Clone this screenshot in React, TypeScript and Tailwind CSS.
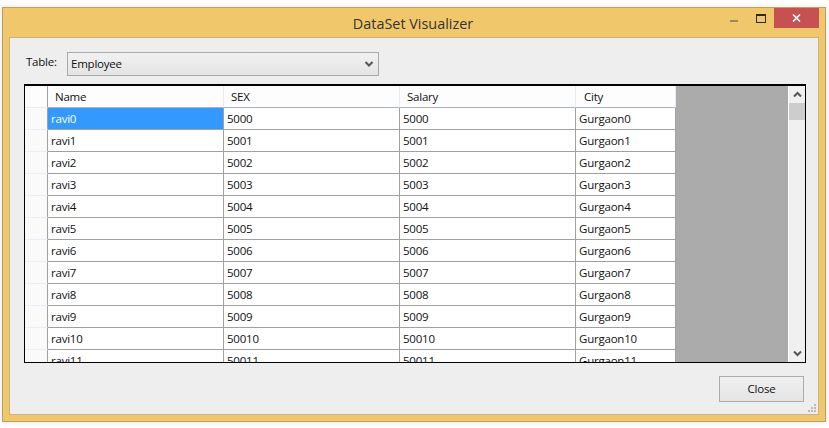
const rows = Array.from({ length: 12 }, (_, i) => i);

function Cell({ w, children, selected }: { w: string; children: React.ReactNode; selected?: boolean }) {
  return (
    <div className={`${w} h-[22px] shrink-0 border-r border-b border-[#a0a0a0] pl-[3px] leading-[21px] whitespace-nowrap ${selected ? "bg-[#3399ff] text-white" : "bg-white text-[#111]"}`}>
      {children}
    </div>
  );
}

function Head({ w, children, pad }: { w: string; children: React.ReactNode; pad: string }) {
  return (
    <div className={`${w} h-[22px] shrink-0 border-r border-b border-r-[#e4ecf5] border-b-[#a9b2c4] bg-[#fdfdfd] ${pad} leading-[21px] text-[#111]`}>
      {children}
    </div>
  );
}

export default function App() {
  return (
    <div className="h-[428px] w-[829px] overflow-hidden bg-white pl-[2px] pt-[7px] text-[11.5px] tracking-[-0.22px] [font-family:'Open_Sans','Noto_Sans',sans-serif]">
      <div className="flex h-[415px] w-[824px] flex-col border border-[#b9a165] bg-[#f0c86b] shadow-[0_0_5px_rgba(0,0,0,0.12)]">
        <div className="relative flex h-[29px] shrink-0 items-center justify-center pt-[2px] pr-[2px] text-[14.4px] tracking-normal text-[#333]">
          DataSet Visualizer
          <div className="absolute right-[6px] top-0 flex h-[20px] items-start">
            <div className="mr-[18px] mt-[12px] h-[2px] w-[8px] bg-[#9a8a58]" />
            <div className="mr-[8px] mt-[6px] h-[9px] w-[10px] border border-t-[2px] border-[#2d2a20] bg-[#f0c86b]" />
            <div className="flex h-[20px] w-[45px] items-center justify-center bg-[#c75050]">
              <svg width="9" height="8" viewBox="0 0 9 8" fill="none" stroke="white" strokeWidth="1.6">
                <path d="M1 0.5 L8 7.5 M8 0.5 L1 7.5" />
              </svg>
            </div>
          </div>
        </div>
        <div className="relative mx-[6px] flex h-[378px] flex-col border border-[#c7b27d] bg-[#eeeeee] px-[14px] pt-[14px]">
          <div className="flex h-[23px] items-center">
            <span className="ml-[2px] w-[41px] -translate-y-[2px] text-[#111]">Table:</span>
            <div className="flex h-[24px] w-[312px] items-center justify-between border border-[#a9a9a9] bg-gradient-to-b from-[#f2f2f2] to-[#e4e4e4] pl-[3px] pr-[4px] text-[#111]">
              Employee
              <svg width="10" height="8" viewBox="0 0 10 8" fill="none" stroke="#555" strokeWidth="2">
                <path d="M1.5 2 L5 5.5 L8.5 2" />
              </svg>
            </div>
          </div>
          <div className="mt-[9px] flex h-[279px] w-[782px] overflow-hidden border border-t-2 border-black bg-[#ababab]">
            <div className="w-[652px] shrink-0 overflow-hidden">
              <div className="flex">
                <div className="h-[22px] w-[23px] shrink-0 border-r border-b border-r-[#a0a0a0] border-b-[#e4ecf5] bg-[#fdfdfd]" />
                <Head w="w-[176px]" pad="pl-[7px]">Name</Head>
                <Head w="w-[176px]" pad="pl-[7px]">SEX</Head>
                <Head w="w-[176px]" pad="pl-[7px]">Salary</Head>
                <Head w="w-[100px]" pad="pl-[8px]">City</Head>
              </div>
              {rows.map((i) => (
                <div key={i} className="flex">
                  <div className="h-[22px] w-[23px] shrink-0 border-r border-b border-r-[#a0a0a0] border-b-[#e9eef8] bg-[#fafafa]" />
                  <Cell w="w-[176px]" selected={i === 0}>ravi{i}</Cell>
                  <Cell w="w-[176px]">500{i}</Cell>
                  <Cell w="w-[176px]">500{i}</Cell>
                  <Cell w="w-[100px]">Gurgaon{i}</Cell>
                </div>
              ))}
            </div>
            <div className="flex-1" />
            <div className="flex w-[17px] shrink-0 flex-col items-center border-l border-white bg-[#f0f0f0]">
              <div className="flex h-[17px] w-full items-center justify-center">
                <svg width="9" height="7" viewBox="0 0 9 7" fill="none" stroke="#555" strokeWidth="2">
                  <path d="M1 5.5 L4.5 2 L8 5.5" />
                </svg>
              </div>
              <div className="h-[17px] w-full bg-[#cdcdcd]" />
              <div className="flex-1" />
              <div className="flex h-[17px] w-full items-center justify-center">
                <svg width="9" height="7" viewBox="0 0 9 7" fill="none" stroke="#555" strokeWidth="2">
                  <path d="M1 1.5 L4.5 5 L8 1.5" />
                </svg>
              </div>
            </div>
          </div>
          <div className="mt-[13px] flex justify-end">
            <div className="flex h-[26px] w-[85px] items-center justify-center border border-[#acacac] bg-gradient-to-b from-[#f0f0f0] to-[#e5e5e5] text-[#111]">
              Close
            </div>
          </div>
          <svg className="absolute bottom-[1px] right-[1px]" width="9" height="9" viewBox="0 0 9 9" fill="#b8b8b8">
            <rect x="6" y="0" width="2" height="2" />
            <rect x="3" y="3" width="2" height="2" />
            <rect x="6" y="3" width="2" height="2" />
            <rect x="0" y="6" width="2" height="2" />
            <rect x="3" y="6" width="2" height="2" />
            <rect x="6" y="6" width="2" height="2" />
          </svg>
        </div>
      </div>
    </div>
  );
}
